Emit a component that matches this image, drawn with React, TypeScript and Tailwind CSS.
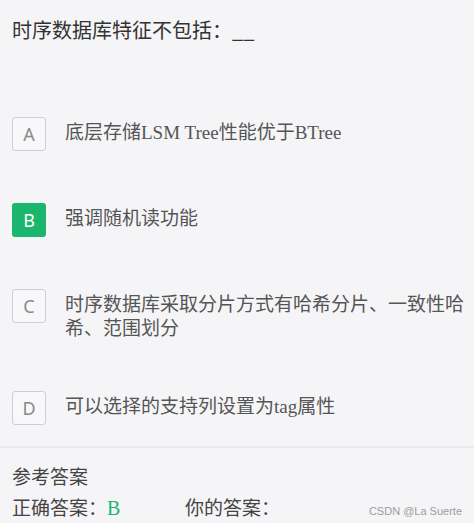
const options = [
  { key: 'A', text: <>底层存储<span className="font-['Liberation_Serif',serif]">LSM Tree</span>性能优于<span className="font-['Liberation_Serif',serif]">BTree</span></> },
  { key: 'B', text: <>强调随机读功能</>, picked: true },
  { key: 'C', text: <>时序数据库采取分片方式有哈希分片、一致性哈希、范围划分</> },
  { key: 'D', text: <>可以选择的支持列设置为<span className="font-['Liberation_Serif',serif]">tag</span>属性</> },
];

export default function App() {
  return (
    <div className="relative w-[474px] h-[523px] overflow-hidden bg-[#f5f5f7] font-['Noto_Sans_CJK_SC',sans-serif]">
      <div className="px-3 pt-4 text-[20px] leading-7 text-[#333]">时序数据库特征不包括：__</div>

      <div className="mt-[73px] flex flex-col gap-[52px] pl-3 pr-2">
        {options.map((o) => (
          <div key={o.key} className="flex items-start gap-[19px]">
            <div
              className={
                o.picked
                  ? 'w-[34px] h-[34px] shrink-0 rounded-[3px] bg-[#1bb66d] text-white flex items-center justify-center text-[18px] font-["Noto_Sans",sans-serif]'
                  : 'w-[34px] h-[34px] shrink-0 rounded-[3px] border border-[#cfcfd3] bg-[#f8f8fa] text-[#8a8a8a] flex items-center justify-center text-[18px] font-["Noto_Sans",sans-serif]'
              }
            >
              {o.key}
            </div>
            <div className="pt-[2px] text-[19px] leading-6 text-[#555]">{o.text}</div>
          </div>
        ))}
      </div>

      <div className="mt-[21px] h-[2px] bg-[#ebebed]" />

      <div className="pl-3 pt-[13px] text-[19px] text-[#444]">
        <div className="leading-[30px]">参考答案</div>
        <div className="flex leading-[32px]">
          <span className="w-[173px]">
            正确答案：<span className="font-['Liberation_Serif',serif] text-[20px] text-[#1bb66d]">B</span>
          </span>
          <span>你的答案：</span>
        </div>
      </div>

      <div className="absolute right-[12px] bottom-[5px] text-[11px] leading-[14px] text-[#9c9c9c] font-['Liberation_Sans',sans-serif]">
        CSDN @La Suerte
      </div>
    </div>
  );
}
